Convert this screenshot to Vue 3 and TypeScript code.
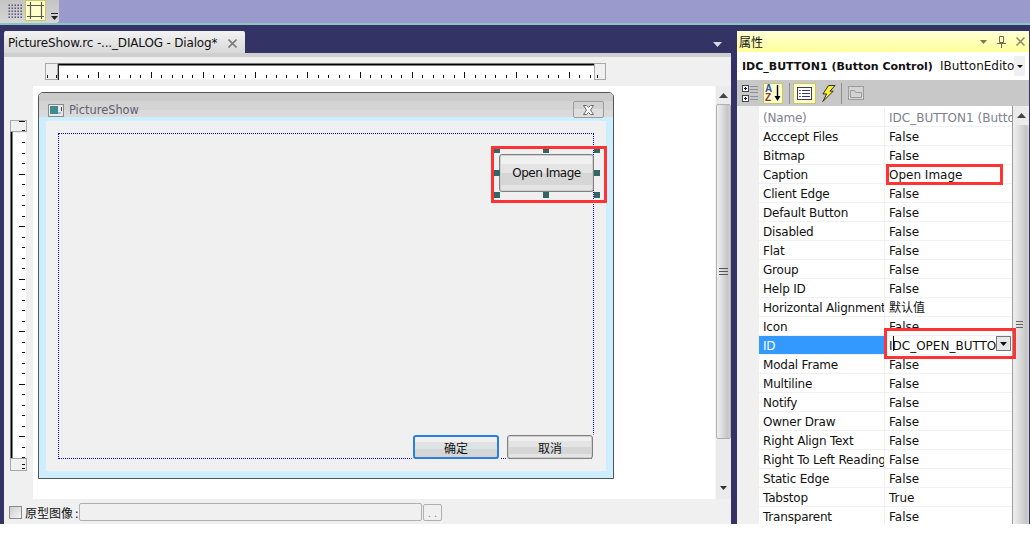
<script setup lang="ts">
interface Prop { name: string; value: string }
const props: Prop[] = [
  { name: 'Acccept Files', value: 'False' },
  { name: 'Bitmap', value: 'False' },
  { name: 'Caption', value: 'Open Image' },
  { name: 'Client Edge', value: 'False' },
  { name: 'Default Button', value: 'False' },
  { name: 'Disabled', value: 'False' },
  { name: 'Flat', value: 'False' },
  { name: 'Group', value: 'False' },
  { name: 'Help ID', value: 'False' },
  { name: 'Horizontal Alignment', value: '默认值' },
  { name: 'Icon', value: 'False' },
  { name: 'ID', value: 'IDC_OPEN_BUTTO' },
  { name: 'Modal Frame', value: 'False' },
  { name: 'Multiline', value: 'False' },
  { name: 'Notify', value: 'False' },
  { name: 'Owner Draw', value: 'False' },
  { name: 'Right Align Text', value: 'False' },
  { name: 'Right To Left Reading', value: 'False' },
  { name: 'Static Edge', value: 'False' },
  { name: 'Tabstop', value: 'True' },
  { name: 'Transparent', value: 'False' },
]
const hTicks = Array.from({ length: 51 }, (_, i) => ({ x: 22 + i * 10.45, major: i % 5 === 3 }))
const vTicks = Array.from({ length: 32 }, (_, i) => ({ y: 22 + i * 10.5, major: i % 5 === 3 }))
const dots = Array.from({ length: 25 }, (_, i) => ({ x: 0.5 + (i % 5) * 3, y: 0.5 + Math.floor(i / 5) * 3 }))
const handles = ['h1', 'h2', 'h3', 'h4', 'h5', 'h6', 'h7', 'h8']
</script>

<template>
  <div class="app">
    <header class="topbar">
      <div class="tools">
        <svg class="dots" width="15" height="15" viewBox="0 0 15 15">
          <rect v-for="(d, i) in dots" :key="i" :x="d.x" :y="d.y" width="1.4" height="1.4" fill="#44446e" />
        </svg>
        <div class="tool-on">
          <svg width="17" height="17" viewBox="0 0 17 17" fill="none" stroke="#5a5a50" stroke-width="1.2">
            <path d="M0 3.5H17M0 14.5H17M3.5 0V17M14.5 0V17" />
          </svg>
        </div>
        <svg class="more" width="7" height="7" viewBox="0 0 7 7">
          <path d="M0 0H7V1H0ZM0 3H7L3.5 7Z" fill="#222" />
        </svg>
      </div>
    </header>

    <main class="workspace">
      <section class="editor">
        <div class="tabstrip">
          <div class="tab">
            <span class="tab-label">PictureShow.rc -..._DIALOG - Dialog*</span>
            <svg width="9" height="9" viewBox="0 0 9 9" stroke="#7d7d7d" stroke-width="1.6" fill="none"><path d="M0.5 0.5L8.5 8.5M8.5 0.5L0.5 8.5" /></svg>
          </div>
          <svg class="strip-arrow" width="9" height="5" viewBox="0 0 9 5"><path d="M0 0H9L4.5 5Z" fill="#d8d8e2" /></svg>
        </div>
        <div class="editor-body">
          <div class="hruler-row">
            <svg class="hruler" width="561" height="18" viewBox="0 0 561 18">
              <rect x="0.5" y="0.5" width="560" height="16" fill="#fff" stroke="#f4f4f4" />
              <path d="M13 1.5H549" stroke="#000" stroke-width="2" />
              <path d="M13.5 1V17" stroke="#222" />
              <rect x="0.5" y="0.5" width="12" height="16" fill="#f0f0f0" stroke="#a8a8a8" />
              <rect x="549.5" y="0.5" width="11" height="16" fill="#f0f0f0" stroke="#a8a8a8" />
              <path d="M2.5 12V15M11.5 12V15" stroke="#111" />
              <path d="M552.5 12V15" stroke="#111" />
              <path v-for="(t, i) in hTicks" :key="i" :d="`M${Math.round(t.x) + 0.5} ${t.major ? 9 : 12}V15`" stroke="#111" />
            </svg>
          </div>
          <div class="canvas-row">
            <div class="vgutter">
              <svg class="vruler" width="17" height="352" viewBox="0 0 17 352">
                <rect x="0.5" y="12.5" width="16" height="326" fill="#fff" stroke="#ececec" />
                <path d="M1.5 12V338" stroke="#000" stroke-width="2" />
                <rect x="0.5" y="0.5" width="16" height="11" fill="#f0f0f0" stroke="#a8a8a8" />
                <rect x="0.5" y="338.5" width="16" height="12" fill="#f0f0f0" stroke="#a8a8a8" />
                <path d="M9 1.5H15M12 10.5H15M12 344.5H15" stroke="#111" />
                <path v-for="(t, i) in vTicks" :key="i" :d="`M${t.major ? 9 : 12} ${Math.round(t.y) + 0.5}H15`" stroke="#111" />
              </svg>
            </div>
            <div class="canvas">
              <div class="dialog">
                <div class="dlg-title">
                  <svg width="16" height="13" viewBox="0 0 16 13">
                    <rect x="0.5" y="0.5" width="15" height="12" fill="#e8e8e8" stroke="#8a8a8a" />
                    <rect x="2" y="2" width="8" height="8" fill="#3d8a90" />
                    <rect x="10" y="8" width="3" height="2" fill="#b8b8c0" />
                    <rect x="13" y="3" width="1" height="4" fill="#445" />
                  </svg>
                  <span class="dlg-name">PictureShow</span>
                  <div class="dlg-close">
                    <svg width="13" height="10" viewBox="0 0 13 10" fill="#fff" stroke="#6a6a6a"><path d="M1.5 0.5H4.5L6.5 2.5L8.5 0.5H11.5L8.5 5L11.5 9.5H8.5L6.5 7.5L4.5 9.5H1.5L4.5 5Z" /></svg>
                  </div>
                </div>
                <div class="dlg-frame">
                  <div class="dlg-client"></div>
                </div>
                <div class="picture"></div>
                <button class="btn open">Open Image</button>
                <span v-for="h in handles" :key="h" class="handle" :class="h"></span>
                <div class="red-a"></div>
                <button class="btn ok">确定</button>
                <button class="btn cancel">取消</button>
              </div>
            </div>
            <div class="vscroll">
              <svg class="sb-up" width="9" height="5" viewBox="0 0 9 5"><path d="M0 5H9L4.5 0Z" fill="#444" /></svg>
              <div class="sb-thumb">
                <svg width="9" height="7" viewBox="0 0 9 7"><path d="M0 0.5H9M0 3.5H9M0 6.5H9" stroke="#555" /></svg>
              </div>
              <div class="sb-track"></div>
              <svg class="sb-down" width="7" height="4" viewBox="0 0 7 4"><path d="M0 0H7L3.5 4Z" fill="#333" /></svg>
            </div>
          </div>
          <div class="proto-row">
            <span class="check"></span>
            <span class="proto-label">原型图像 :</span>
            <span class="proto-input"></span>
            <span class="proto-btn">. .</span>
          </div>
        </div>
      </section>

      <aside class="panel">
        <div class="panel-title">
          <span class="panel-name">属性</span>
          <svg class="pt-menu" width="7" height="4" viewBox="0 0 7 4"><path d="M0 0H7L3.5 4Z" fill="#7a7a50" /></svg>
          <svg width="9" height="12" viewBox="0 0 9 12" fill="none" stroke="#6a6a50"><path d="M2.5 0.5H6.5V6.5H2.5ZM0 7.5H9M4.5 7.5V12" /></svg>
          <svg width="9" height="9" viewBox="0 0 9 9" stroke="#8a8a60" stroke-width="1.5" fill="none"><path d="M0.5 0.5L8.5 8.5M8.5 0.5L0.5 8.5" /></svg>
        </div>
        <div class="combo">
          <b class="combo-b">IDC_BUTTON1 (Button Control)</b>
          <span class="combo-t">IButtonEdito</span>
          <span class="combo-arrow"><svg width="6" height="3" viewBox="0 0 6 3"><path d="M0 0H6L3 3Z" fill="#111" /></svg></span>
        </div>
        <div class="pgbar">
          <svg class="pg-cat" width="17" height="17" viewBox="0 0 17 17">
            <rect x="0.5" y="0.5" width="6" height="6" fill="#fff" stroke="#445" />
            <rect x="0.5" y="10.5" width="6" height="6" fill="#fff" stroke="#445" />
            <path d="M2 3.5H5M3.5 2V5M2 13.5H5M3.5 12V15" stroke="#114" />
            <path d="M8 1.5H16M8 4.5H16M8 7.5H16M8 11.5H16M8 14.5H16" stroke="#8a8f9a" />
          </svg>
          <div class="pg-on az">
            <svg width="17" height="18" viewBox="0 0 17 18">
              <text x="0" y="8" class="az-a">A</text>
              <text x="0" y="17" class="az-z">Z</text>
              <path d="M12.5 1V15" stroke="#000" stroke-width="1.4" />
              <path d="M9.5 12H15.5L12.5 17Z" fill="#000" />
            </svg>
          </div>
          <span class="pg-sep sep1"></span>
          <div class="pg-on list">
            <svg width="15" height="13" viewBox="0 0 15 13">
              <rect x="0.5" y="0.5" width="14" height="12" fill="#fff" stroke="#3a3a66" />
              <path d="M2 3.5H4M2 6.5H4M2 9.5H4" stroke="#667" />
              <path d="M5 3.5H13M5 6.5H13M5 9.5H13" stroke="#3a3a66" />
            </svg>
          </div>
          <svg class="bolt" width="15" height="17" viewBox="0 0 16 18">
            <path d="M8 0.5H15L9.5 6.5H13L2 17.5L6 9.5H2Z" fill="#ffee33" stroke="#222" />
          </svg>
          <span class="pg-sep sep2"></span>
          <svg class="pg-dis" width="16" height="14" viewBox="0 0 16 14" fill="none" stroke="#9c9c9c">
            <rect x="0.5" y="0.5" width="15" height="13" fill="#d4d4d4" />
            <path d="M2.5 4.5H6.5L7.5 6.5H13.5V11.5H2.5Z" />
          </svg>
        </div>
        <div class="grid">
          <div class="grid-rows">
            <div class="row head">
              <span class="gut"></span>
              <span class="name">(Name)</span>
              <span class="val">IDC_BUTTON1 (Butto</span>
            </div>
            <div v-for="p in props" :key="p.name" class="row" :class="{ sel: p.name === 'ID' }">
              <span class="gut"></span>
              <span class="name">{{ p.name }}</span>
              <span class="val">{{ p.value }}</span>
            </div>
          </div>
          <div class="pscroll">
            <svg class="sb-up2" width="9" height="5" viewBox="0 0 9 5"><path d="M0 5H9L4.5 0Z" fill="#444" /></svg>
            <div class="pthumb">
              <svg class="grip" width="7" height="7" viewBox="0 0 7 7"><path d="M0 0.5H7M0 3.5H7M0 6.5H7" stroke="#666" /></svg>
            </div>
          </div>
          <div class="red-b"></div>
          <div class="red-c">
            <i class="caret"></i>
            <span class="id-arrow"><svg width="7" height="4" viewBox="0 0 7 4"><path d="M0 0H7L3.5 4Z" fill="#111" /></svg></span>
          </div>
        </div>
      </aside>
    </main>
  </div>
</template>

<style>
html, body { margin: 0; background: #fff; }
</style>

<style scoped>
.app {
  width: 1030px;
  height: 546px;
  overflow: hidden;
  background: #fff;
  font-family: "DejaVu Sans", "Noto Sans CJK SC", sans-serif;
  font-size: 12px;
  color: #111;
  display: flex;
  flex-direction: column;
}
.topbar {
  height: 23px;
  flex: none;
  background: #9a9acc;
  border-bottom: 2px solid #8ec4c4;
}
.tools {
  width: 59px;
  height: 23px;
  background: linear-gradient(#c4c4c4, #d6d6d6);
  border-radius: 0 0 3px 0;
  display: flex;
  align-items: flex-start;
  position: relative;
}
.dots { margin: 4px 0 0 8px; }
.tool-on {
  margin: 0 0 0 2px;
  width: 21px;
  height: 21px;
  box-sizing: border-box;
  background: #ffffcc;
  border: 1px solid #c8c860;
  display: flex;
  align-items: center;
  justify-content: center;
}
.more { margin: 13px 0 0 5px; }
.workspace {
  height: 499px;
  flex: none;
  background: #333366;
  display: flex;
  padding: 6px 1px 0 4px;
  box-sizing: border-box;
}
.editor {
  width: 727px;
  flex: none;
  display: flex;
  flex-direction: column;
}
.tabstrip {
  height: 22px;
  flex: none;
  display: flex;
  justify-content: space-between;
  align-items: flex-start;
}
.tab {
  width: 241px;
  height: 22px;
  box-sizing: border-box;
  background: linear-gradient(#f2f2f2, #d8d8d8);
  display: flex;
  align-items: center;
  padding: 2px 0 0 4px;
  border-radius: 2px 2px 0 0;
}
.tab-label { width: 220px; white-space: nowrap; letter-spacing: -0.17px; }
.strip-arrow { margin: 11px 9px 0 0; }
.editor-body {
  flex: 1;
  background: #f0f0f0;
  border-top: 4px solid #cfcfcf;
  display: flex;
  flex-direction: column;
  min-height: 0;
}
.hruler-row { height: 29px; flex: none; padding: 6px 0 0 41px; box-sizing: border-box; }
.hruler { display: block; }
.canvas-row { height: 413px; flex: none; display: flex; }
.vgutter { width: 29px; flex: none; padding: 34px 0 0 6px; box-sizing: border-box; }
.vruler { display: block; }
.canvas { width: 682px; flex: none; background: #fff; padding: 6px 0 0 5px; box-sizing: border-box; }
.dialog {
  position: relative;
  width: 576px;
  height: 387px;
  box-sizing: border-box;
  display: flex;
  flex-direction: column;
  border: 1px solid #555;
  border-radius: 5px 5px 0 0;
}
.dlg-title {
  height: 24px;
  flex: none;
  background: linear-gradient(#cbcbcb 0 8px, #d4d4d4 8px 17px, #dadada 17px);
  display: flex;
  align-items: center;
  padding: 10px 0 0 9px;
  box-sizing: border-box;
  border-radius: 4px 4px 0 0;
  position: relative;
}
.dlg-name { margin-left: 5px; color: #5f6070; font-size: 11.4px; }
.dlg-close {
  position: absolute;
  left: 534px;
  top: 8px;
  width: 31px;
  height: 17px;
  box-sizing: border-box;
  border: 1px solid #9c9c9c;
  border-radius: 2px;
  background: linear-gradient(#d2d2d2 50%, #dedede 50%);
  display: flex;
  align-items: center;
  justify-content: center;
}
.dlg-frame {
  flex: 1;
  background: #cceeff;
  padding: 4px 7px 7px 7px;
  display: flex;
}
.dlg-client { flex: 1; background: #f0f0f0; }
.picture {
  position: absolute;
  left: 19px;
  top: 40px;
  width: 536px;
  height: 326px;
  box-sizing: border-box;
  border: 1px dotted #0000cc;
}
.btn {
  position: absolute;
  margin: 0;
  padding: 0;
  box-sizing: border-box;
  font: inherit;
  color: #111;
  border: 1px solid #808080;
  border-radius: 3px;
  box-shadow: inset 0 0 0 1px #d0d0d0;
  background: linear-gradient(#f0f0f0 0 24%, #e4e4e4 24% 50%, #d6d6d6 50% 84%, #e4e4e4 84%);
}
.open { left: 460px; top: 61px; width: 95px; height: 38px; letter-spacing: -0.5px; }
.ok {
  left: 374px;
  top: 342px;
  width: 86px;
  height: 24px;
  border: 2px solid #2a80dc;
  box-shadow: 0 0 0 2px #f0f0f0;
  background: linear-gradient(#f0f0f0 0 24%, #e2e2e2 24% 50%, #d0e8ee 50% 58%, #d6d6d6 58%);
}
.cancel {
  left: 468px;
  top: 342px;
  width: 86px;
  height: 24px;
  box-shadow: 0 0 0 2px #f0f0f0, inset 0 0 0 1px #d0d0d0;
}
.handle { position: absolute; width: 6px; height: 6px; background: #336666; }
.h1 { left: 455px; top: 54px; }
.h2 { left: 504px; top: 54px; }
.h3 { left: 555px; top: 54px; }
.h4 { left: 455px; top: 77px; }
.h5 { left: 555px; top: 77px; }
.h6 { left: 455px; top: 99px; }
.h7 { left: 504px; top: 99px; }
.h8 { left: 555px; top: 99px; }
.red-a {
  position: absolute;
  left: 452px;
  top: 53px;
  width: 116px;
  height: 57px;
  box-sizing: border-box;
  border: 3px solid #ff3333;
}
.vscroll {
  width: 16px;
  flex: none;
  box-sizing: border-box;
  background: #ebebeb;
  border-left: 1px solid #f6f6f6;
  display: flex;
  flex-direction: column;
  align-items: center;
}
.sb-up { margin-top: 7px; flex: none; }
.sb-thumb {
  margin-top: 6px;
  width: 15px;
  height: 335px;
  flex: none;
  box-sizing: border-box;
  border: 1px solid #b0b0b0;
  border-radius: 2px;
  background: linear-gradient(90deg, #f0f0f0, #dcdcdc 40%, #c4c4c4 85%, #d6d6d6);
  display: flex;
  align-items: center;
  justify-content: center;
}
.sb-track { flex: 1; }
.sb-down { margin-bottom: 9px; flex: none; }
.proto-row {
  flex: 1;
  display: flex;
  align-items: center;
  padding: 1px 0 0 5px;
}
.check {
  width: 13px;
  height: 13px;
  box-sizing: border-box;
  border: 1px solid #8a8a8a;
  background: linear-gradient(135deg, #cfcfcf, #f4f4f4);
}
.proto-label { margin-left: 3px; width: 54px; white-space: nowrap; font-size: 12px; word-spacing: -2px; }
.proto-input {
  width: 343px;
  height: 18px;
  box-sizing: border-box;
  border: 1px solid #b0b0b0;
  border-radius: 2px;
  background: #f0f0f0;
}
.proto-btn {
  margin-left: 1px;
  width: 19px;
  height: 17px;
  box-sizing: border-box;
  border: 1px solid #b0b0b0;
  border-radius: 2px;
  color: #888;
  font-size: 10px;
  line-height: 17px;
  text-align: center;
}
.panel {
  width: 292px;
  margin-left: 6px;
  flex: none;
  background: #f0f0f0;
  display: flex;
  flex-direction: column;
}
.panel-title {
  height: 21px;
  flex: none;
  background: linear-gradient(#ffffd8, #ffff99);
  display: flex;
  align-items: center;
  gap: 10px;
  padding: 0 4px 0 2px;
  border-radius: 2px 2px 0 0;
}
.panel-name { flex: 1; font-size: 12px; }
.combo {
  height: 28px;
  flex: none;
  background: #fff;
  display: flex;
  align-items: center;
  padding: 0 0 0 5px;
  white-space: nowrap;
}
.combo-b { width: 198px; font-size: 11px; }
.combo-t { width: 74px; }
.combo-arrow {
  width: 11px;
  height: 20px;
  background: #f0f0f0;
  display: flex;
  align-items: center;
  justify-content: center;
}
.pgbar {
  height: 26px;
  flex: none;
  background: #c8c8c8;
  display: flex;
  align-items: center;
  padding-left: 5px;
}
.pg-on {
  height: 21px;
  box-sizing: border-box;
  background: #ffffcc;
  border: 1px solid #c8c860;
  display: flex;
  align-items: center;
  justify-content: center;
}
.az { width: 20px; margin-left: 4px; }
.az-a { font: bold 10px "Liberation Sans", sans-serif; fill: #3355aa; }
.az-z { font: bold 10px "Liberation Sans", sans-serif; fill: #883344; }
.list { width: 23px; margin-left: 3px; }
.pg-sep { width: 1px; height: 21px; background: #8f8f8f; }
.sep1 { margin-left: 6px; }
.sep2 { margin-left: 5px; }
.bolt { margin-left: 5px; }
.pg-dis { margin-left: 6px; }
.grid {
  flex: 1;
  display: flex;
  position: relative;
  background: #fff;
  min-height: 0;
  overflow: hidden;
}
.grid-rows { width: 275px; flex: none; padding-top: 2px; background: linear-gradient(90deg, #f0f0f0 22px, #fff 22px); }
.row {
  height: 19px;
  box-sizing: border-box;
  display: flex;
  align-items: center;
  white-space: nowrap;
  border-bottom: 1px solid #f0f0f0;
}
.gut { width: 22px; height: 19px; flex: none; background: #f0f0f0; }
.name {
  width: 125px;
  flex: none;
  box-sizing: border-box;
  padding-left: 4px;
  overflow: hidden;
  height: 18px;
  line-height: 20px;
  letter-spacing: -0.2px;
}
.val {
  flex: 1;
  box-sizing: border-box;
  padding-left: 4px;
  border-left: 1px solid #f0f0f0;
  height: 18px;
  line-height: 20px;
  overflow: hidden;
}
.head .name, .head .val { color: #808090; }
.sel .name { background: #3399ff; color: #fff; }
.pscroll {
  flex: 1;
  box-sizing: border-box;
  border-left: 1px solid #9a9a9a;
  background: #ebebeb;
  display: flex;
  flex-direction: column;
  align-items: center;
}
.sb-up2 { margin-top: 7px; flex: none; }
.pthumb {
  margin-top: 7px;
  width: 100%;
  height: 420px;
  flex: none;
  box-sizing: border-box;
  background: linear-gradient(90deg, #f0f0f0, #dcdcdc 40%, #c4c4c4 85%, #d6d6d6);
  border-radius: 2px;
  position: relative;
}
.grip { position: absolute; left: 3px; top: 196px; }
.red-b {
  position: absolute;
  left: 149px;
  top: 58px;
  width: 117px;
  height: 21px;
  box-sizing: border-box;
  border: 3px solid #ff3333;
}
.red-c {
  position: absolute;
  left: 147px;
  top: 222px;
  width: 132px;
  height: 31px;
  box-sizing: border-box;
  border: 3px solid #ff3333;
}
.caret { position: absolute; left: 6px; top: 5px; width: 1px; height: 15px; background: #000; }
.id-arrow {
  position: absolute;
  right: 2px;
  top: 5px;
  width: 15px;
  height: 15px;
  box-sizing: border-box;
  border: 1px solid #777;
  background: #e8e8e8;
  display: flex;
  align-items: center;
  justify-content: center;
}
</style>
